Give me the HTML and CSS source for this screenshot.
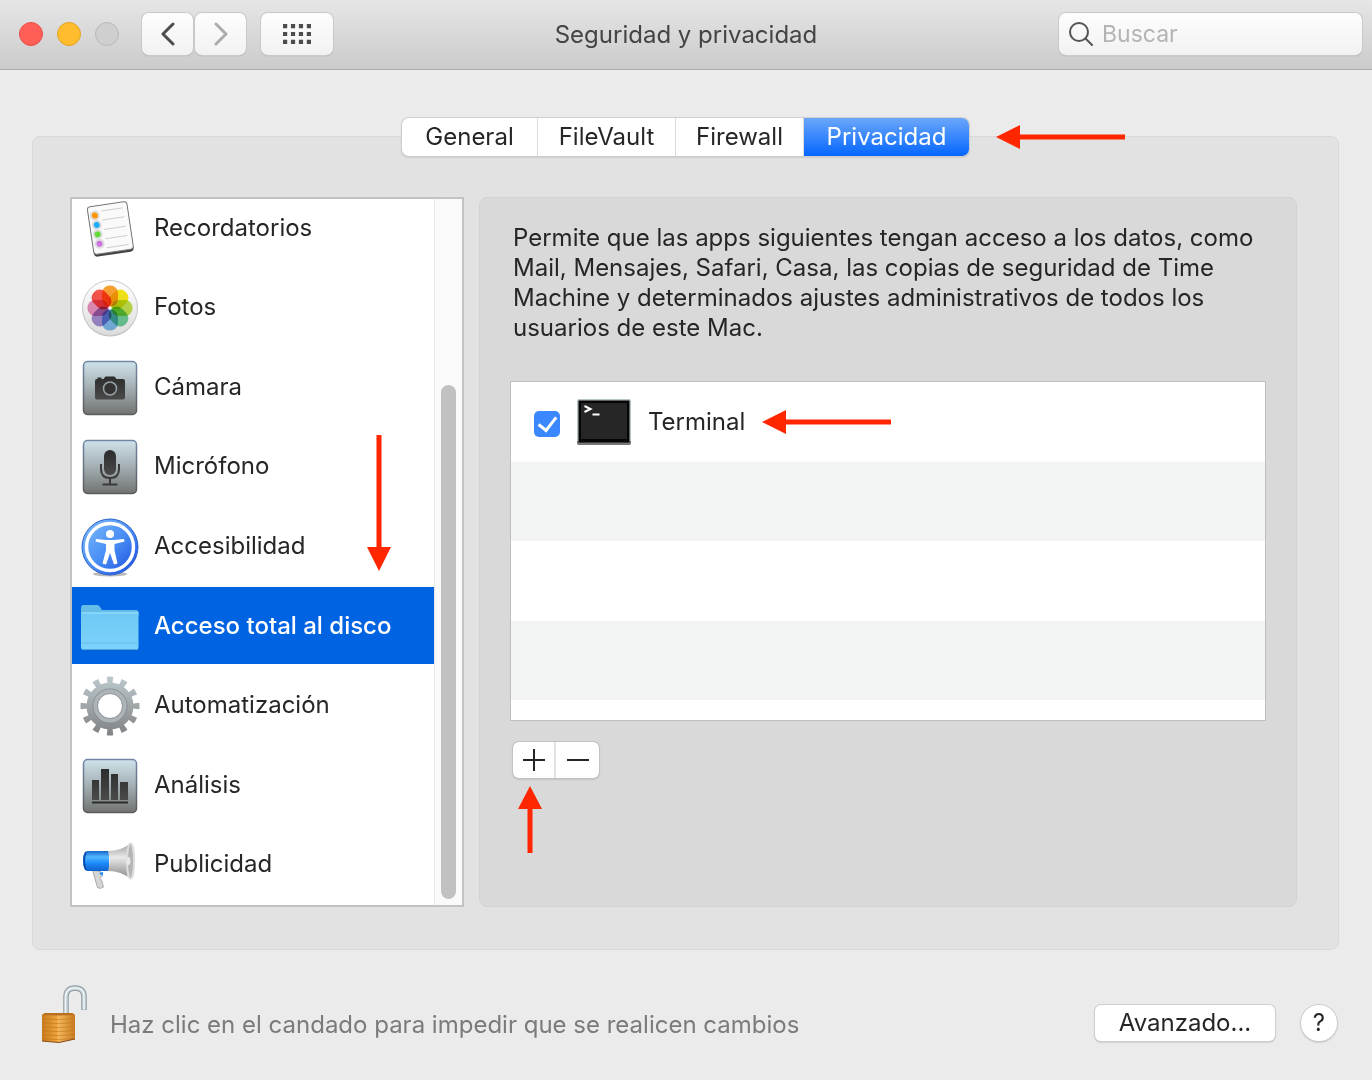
FILE: index.html
```html
<!DOCTYPE html>
<html lang="es">
<head>
<meta charset="utf-8">
<meta name="viewport" content="width=device-width, initial-scale=1">
<title>Seguridad y privacidad</title>
<link rel="stylesheet" href="styles.css">
</head>
<body>
<svg class="defs" aria-hidden="true">
  <defs>
    <linearGradient id="steel" x1="0" y1="0" x2="0" y2="1"><stop offset="0" stop-color="#cfe2ea"/><stop offset=".5" stop-color="#a3aeb2"/><stop offset="1" stop-color="#717371"/></linearGradient>
    <linearGradient id="edge" x1="0" y1="0" x2="0" y2="1"><stop offset="0" stop-color="#7388a5"/><stop offset="1" stop-color="#5b5b5b"/></linearGradient>
    <linearGradient id="dark" x1="0" y1="0" x2="0" y2="1"><stop offset="0" stop-color="#2c2c2c"/><stop offset="1" stop-color="#4a4a4a"/></linearGradient>
    <linearGradient id="gearfill" gradientUnits="userSpaceOnUse" x1="0" y1="0" x2="0" y2="60"><stop offset="0" stop-color="#bccace"/><stop offset=".5" stop-color="#a0a5a8"/><stop offset="1" stop-color="#808284"/></linearGradient>
    <linearGradient id="disc" x1="0" y1="0" x2="0" y2="1"><stop offset="0" stop-color="#ffffff"/><stop offset="1" stop-color="#dcdcdc"/></linearGradient>
    <linearGradient id="blue" x1="0" y1="0" x2="1" y2="1"><stop offset="0" stop-color="#7fbdfb"/><stop offset=".5" stop-color="#4a90f5"/><stop offset="1" stop-color="#1a48e0"/></linearGradient>
    <linearGradient id="folder" x1="0" y1="0" x2="0" y2="1"><stop offset="0" stop-color="#6dc9f5"/><stop offset="1" stop-color="#7dd3fb"/></linearGradient>
    <linearGradient id="barrel" x1="0" y1="0" x2="0" y2="1"><stop offset="0" stop-color="#1566c8"/><stop offset=".3" stop-color="#55b7ff"/><stop offset=".6" stop-color="#1c8cf8"/><stop offset="1" stop-color="#0d62cf"/></linearGradient>
    <linearGradient id="horn" x1="0" y1="0" x2="0" y2="1"><stop offset="0" stop-color="#9a9a9a"/><stop offset=".4" stop-color="#e9e9e9"/><stop offset="1" stop-color="#858585"/></linearGradient>
    <linearGradient id="brass" x1="0" y1="0" x2="1" y2="0"><stop offset="0" stop-color="#c87a1c"/><stop offset=".45" stop-color="#eda43c"/><stop offset=".5" stop-color="#f4b75a"/><stop offset="1" stop-color="#c97b20"/></linearGradient>
  </defs>
</svg>

<header class="toolbar">
  <div class="toolbar-left">
    <div class="lights">
      <button class="light light-close" aria-label="Cerrar"></button>
      <button class="light light-min" aria-label="Minimizar"></button>
      <button class="light light-zoom" aria-label="Ampliar" disabled></button>
    </div>
    <div class="nav">
      <button class="tool" aria-label="Atrás"><svg width="14" height="24" viewBox="0 0 14 24"><path d="M12 2 2 12l10 10" fill="none" stroke="#4c4c4c" stroke-width="3" stroke-linecap="round" stroke-linejoin="round"/></svg></button>
      <button class="tool" aria-label="Adelante"><svg width="14" height="24" viewBox="0 0 14 24"><path d="m2 2 10 10L2 22" fill="none" stroke="#acacac" stroke-width="3" stroke-linecap="round" stroke-linejoin="round"/></svg></button>
    </div>
    <button class="tool tool-wide" aria-label="Mostrar todo"><svg width="28" height="20" viewBox="0 0 28 20"><path d="M0 2.200H28M0 10H28M0 17.800H28" fill="none" stroke="#4c4c4c" stroke-width="4.200" stroke-dasharray="4.200 3.730"/></svg></button>
  </div>
  <h1 class="title">Seguridad y privacidad</h1>
  <label class="search">
    <svg width="25" height="25" viewBox="0 0 25 25"><g fill="none" stroke="#555" stroke-width="2" stroke-linecap="round"><circle cx="10" cy="11" r="9"/><path d="m16.500 17.500 6.500 6.500"/></g></svg>
    <input type="search" placeholder="Buscar" aria-label="Buscar">
  </label>
</header>

<main class="content">
  <div class="tabs" role="tablist">
    <button class="tab" role="tab">General</button>
    <button class="tab" role="tab">FileVault</button>
    <button class="tab" role="tab">Firewall</button>
    <button class="tab tab-active" role="tab" aria-selected="true">Privacidad</button>
    <svg class="arrow arrow-tabs" width="129" height="24" viewBox="0 0 129 24"><path d="M0 12 24 0v9.500h105v5H24V24z"/></svg>
  </div>

  <section class="group">
    <div class="categories">
      <ul class="category-list">
        <li class="category"><svg class="icon" viewBox="0 0 60 60"><g transform="rotate(-8.500 30 30)"><rect x="10.500" y="7" width="40" height="48.500" rx="3.500" fill="#444"/><rect x="10.500" y="5" width="40" height="48" rx="3" fill="#fafafa" stroke="#777" stroke-width="1"/><path d="M24 11h22M24 20h22M24 29.500h22M24 39h22M24 48h22" stroke="#cfcfcf" stroke-width="1"/><g stroke="#ddd" stroke-width="2"><circle cx="17" cy="14.500" r="4" fill="#ff9500"/><circle cx="17.500" cy="24" r="4" fill="#1badf8"/><circle cx="17" cy="33.500" r="4" fill="#63da38"/><circle cx="17.500" cy="43" r="4" fill="#cc73e1"/></g></g></svg><span>Recordatorios</span></li>
        <li class="category"><svg class="icon" viewBox="0 0 60 60"><circle cx="30" cy="31" r="27.500" fill="#bbb"/><circle cx="30" cy="30" r="27.500" fill="url(#disc)" stroke="#c9c9c9"/><g class="petals"><rect x="22" y="7.500" width="16" height="21" rx="7.500" fill="#fba333"/><rect x="22" y="7.500" width="16" height="21" rx="7.500" fill="#f7e81a" transform="rotate(45 30 30)"/><rect x="22" y="7.500" width="16" height="21" rx="7.500" fill="#c0e04c" transform="rotate(90 30 30)"/><rect x="22" y="7.500" width="16" height="21" rx="7.500" fill="#70d09b" transform="rotate(135 30 30)"/><rect x="22" y="7.500" width="16" height="21" rx="7.500" fill="#7fbcee" transform="rotate(180 30 30)"/><rect x="22" y="7.500" width="16" height="21" rx="7.500" fill="#a48fd2" transform="rotate(225 30 30)"/><rect x="22" y="7.500" width="16" height="21" rx="7.500" fill="#e890bc" transform="rotate(270 30 30)"/><rect x="22" y="7.500" width="16" height="21" rx="7.500" fill="#fa564e" transform="rotate(315 30 30)"/></g><circle cx="30" cy="30" r="1.500" fill="#fff"/></svg><span>Fotos</span></li>
        <li class="category"><svg class="icon" viewBox="0 0 60 60"><rect x="3.500" y="3.500" width="53" height="53" rx="4" fill="url(#steel)" stroke="url(#edge)" stroke-width="1.500"/><path d="M17 21h6.500l2-2.500h9l2 2.500H43q2 0 2 2v16.500q0 2-2 2H17q-2 0-2-2V23q0-2 2-2z" fill="url(#dark)"/><path d="M17.500 19.500h4V21h-4z" fill="#333"/><circle cx="30" cy="30.500" r="6.500" fill="#333" stroke="#98a2a6" stroke-width="1.500"/></svg><span>Cámara</span></li>
        <li class="category"><svg class="icon" viewBox="0 0 60 60"><rect x="3.500" y="3.500" width="53" height="53" rx="4" fill="url(#steel)" stroke="url(#edge)" stroke-width="1.500"/><rect x="24" y="13" width="12" height="25" rx="6" fill="url(#dark)"/><path d="M21 27v5q0 9 9 9t9-9v-5M30 41v6M22.500 47.500h15" fill="none" stroke="#3a3a3a" stroke-width="2"/></svg><span>Micrófono</span></li>
        <li class="category"><svg class="icon" viewBox="0 0 60 60"><ellipse cx="30" cy="57" rx="17" ry="2.500" fill="#bbb"/><circle cx="30" cy="30" r="28" fill="url(#blue)" stroke="#2e62c8"/><circle cx="30" cy="30" r="23.500" fill="none" stroke="#fff" stroke-width="3.500"/><circle cx="30" cy="17" r="4" fill="#fff"/><path d="m16 22 10 1h8l10-1 .5 2.500-10 2.500v6l3 13.500-3.500 1L30 36l-4 11.500-3.500-1L26 33v-6l-10.500-2.500z" fill="#fff"/></svg><span>Accesibilidad</span></li>
        <li class="category category-selected"><svg class="icon" viewBox="0 0 60 60"><path d="M1 11q0-3 3-3h13q2 0 3 2l2 3h34q2.500 0 2.500 2.500V20H1z" fill="#63bde8"/><path d="M1 15.500h57.500V50q0 3-3 3H4q-3 0-3-3z" fill="url(#folder)"/><path d="M1.500 16h57" stroke="#a2e2ff"/><path d="M1 46h57.500" stroke="#66c0ea"/><path d="M2 52.500h56" stroke="#4ca6d8"/></svg><span>Acceso total al disco</span></li>
        <li class="category"><svg class="icon" viewBox="0 0 60 60"><g fill="none" stroke="url(#gearfill)"><circle cx="30" cy="30" r="25.500" stroke-width="8" pathLength="120" stroke-dasharray="4.400 5.600" stroke-dashoffset="2.200"/><circle cx="30" cy="30" r="18" stroke-width="11"/></g><circle cx="30" cy="30" r="17" fill="none" stroke="#848a8e"/><circle cx="30" cy="30" r="14.500" fill="none" stroke="#adb4b7" stroke-width="4"/><circle cx="30" cy="30" r="12.500" fill="#fff" stroke="#8a8f92"/></svg><span>Automatización</span></li>
        <li class="category"><svg class="icon" viewBox="0 0 60 60"><rect x="3.500" y="3.500" width="53" height="53" rx="4" fill="url(#steel)" stroke="url(#edge)" stroke-width="1.500"/><path d="M12 24h7v20h-7zM21 13h8v31h-8zM31 18h7v26h-7zM40 26h8v18h-8z" fill="url(#dark)"/><path d="M12 46.500h36" stroke="#2c2c2c" stroke-width="2"/></svg><span>Análisis</span></li>
        <li class="category"><svg class="icon" viewBox="0 0 60 60"><path d="m12.500 35 8 1.500 1 5.500q-3 1 0 3l2 7q-3 2.500-6 .5z" fill="#d5d5d5" stroke="#aaa"/><path d="m19 38 4-1v4z" fill="#1c8cf8"/><path d="M7 16h22v20H7q-4-2-4-10t4-10z" fill="url(#barrel)"/><path d="M6 17q-4 8 0 18" fill="none" stroke="#0b4fae" stroke-width="2"/><path d="M28 16q13 0 23-8v36q-10-8-23-8 3-10 0-20z" fill="url(#horn)"/><ellipse cx="50.500" cy="26" rx="3.500" ry="17.500" fill="#b4b4b4" stroke="#dcdcdc" stroke-width="2"/><ellipse cx="48.500" cy="26" rx="2" ry="4" fill="#e8e8e8"/></svg><span>Publicidad</span></li>
      </ul>
      <div class="scrollbar"><div class="thumb"></div></div>
      <svg class="arrow arrow-list" width="24" height="136" viewBox="0 0 24 136"><path d="M12 136 0 112h9.500V0h5v112H24z"/></svg>
    </div>

    <div class="detail">
      <p class="description">Permite que las apps siguientes tengan acceso a los datos, como Mail, Mensajes, Safari, Casa, las copias de seguridad de Time Machine y determinados ajustes administrativos de todos los usuarios de este Mac.</p>
      <ul class="apps">
        <li class="app">
          <input class="check" type="checkbox" id="app-terminal" checked>
          <label class="app-label" for="app-terminal">
            <svg width="54" height="46" viewBox="0 0 54 46"><rect x="0" y="0" width="54" height="46" rx="2" fill="#b9c4c7"/><path d="M0 42h54v2q0 2-2 2H2q-2 0-2-2z" fill="#777"/><rect x="1.500" y="1.500" width="51" height="42" fill="#050505"/><rect x="4" y="4" width="46" height="36" fill="#262626"/><path d="m7.500 7 6 3-6 3M15.500 15.500h7" fill="none" stroke="#fff" stroke-width="2"/></svg>
            <span>Terminal</span>
          </label>
          <svg class="arrow" width="129" height="24" viewBox="0 0 129 24"><path d="M0 12 24 0v9.500h105v5H24V24z"/></svg>
        </li>
      </ul>
      <div class="edit">
        <button class="edit-button" aria-label="Añadir"><svg width="22" height="22" viewBox="0 0 22 22"><path d="M0 11h22M11 0v22" stroke="#262626" stroke-width="2"/></svg></button>
        <button class="edit-button" aria-label="Eliminar"><svg width="22" height="22" viewBox="0 0 22 22"><path d="M0 11h22" stroke="#262626" stroke-width="2"/></svg></button>
      </div>
      <svg class="arrow arrow-add" width="24" height="67" viewBox="0 0 24 67"><path d="m12 0 12 23h-9.500v44h-5V23H0z"/></svg>
    </div>
  </section>
</main>

<footer class="footer">
  <button class="lock" aria-label="Candado"><svg width="46" height="60" viewBox="0 0 46 60"><g fill="none"><path d="M24 31V13q0-9 9-9t9 9v13" stroke="#8e9ca2" stroke-width="5.500"/><path d="M24 31V13q0-9 9-9t9 9v12.500" stroke="#c3d0d5" stroke-width="3.500"/><path d="M23.500 31V13q0-9 9.500-9t9 9v12.500" stroke="#eef4f6" stroke-width="1.500"/></g><path d="m0 31 3-2h27l3 2v24l-16 3.500L0 57z" fill="url(#brass)"/><path d="m3 29-3 2 16 .5 17-.5-3-2z" fill="#b87020"/><path d="m0 35 17 .5 16-1M0 39l17 .5 16-1M0 43l17 .5 16-1M0 47l17 .5 16-1M0 51l17 .5 16-1M0 55l17 .5 16-1" fill="none" stroke="#b96f18" stroke-opacity=".5"/><path d="m0 57 17 1.500L33 55" fill="none" stroke="#8c4a12"/></svg></button>
  <p class="hint">Haz clic en el candado para impedir que se realicen cambios</p>
  <button class="advanced">Avanzado...</button>
  <button class="help" aria-label="Ayuda">?</button>
</footer>
</body>
</html>
```
FILE: styles.css
```css
* {
  box-sizing: border-box;
}

body {
  margin: 0;
  min-height: 100vh;
  display: flex;
  flex-direction: column;
  background: #ebebeb;
  color: #262626;
  font-family: Inter, "Liberation Sans", sans-serif;
  font-size: 24px;
  line-height: 30px;
}

button,
input {
  font: inherit;
  color: inherit;
  padding: 0;
  border: 0;
}

ul,
p,
h1 {
  margin: 0;
  padding: 0;
  list-style: none;
}

svg {
  display: block;
  flex: none;
}

.defs {
  position: absolute;
  width: 0;
  height: 0;
}

.arrow {
  fill: #ff2600;
}

/* Toolbar */
.toolbar {
  display: grid;
  grid-template-columns: 1fr auto 1fr;
  align-items: center;
  height: 70px;
  padding: 0 10px 2px;
  background: linear-gradient(#e6e6e6, #cbcbcb);
  border-bottom: 1px solid #acacac;
}

.toolbar-left {
  display: flex;
  align-items: center;
  gap: 15px;
  padding-left: 9px;
}

.lights {
  display: flex;
  gap: 14px;
  padding-right: 8px;
}

.light {
  width: 24px;
  height: 24px;
  border-radius: 50%;
}

.light-close {
  background: #ff5f57;
  border: 1px solid #e8504a;
}

.light-min {
  background: #ffbd2e;
  border: 1px solid #e3a325;
}

.light-zoom {
  background: #cfcfcf;
  border: 1px solid #b9b9b9;
}

.nav {
  display: flex;
  gap: 2px;
}

.tool,
.search {
  display: flex;
  align-items: center;
  height: 42px;
  border-radius: 7px;
  background: linear-gradient(#fdfdfd, #f2f2f2);
  box-shadow: 0 0 0 1px #c9c9c9, 0 1px 1px #8f8f8f;
}

.tool {
  justify-content: center;
  width: 51px;
}

.tool-wide {
  width: 72px;
}

.title {
  padding-top: 2px;
  font-size: 24px;
  font-weight: 400;
  color: #444;
}

.search {
  justify-self: end;
  width: 303px;
  padding: 0 10px;
  gap: 8px;
}

.search input {
  flex: 1;
  min-width: 0;
  background: none;
  outline: 0;
  font-size: 23px;
}

.search input::placeholder {
  color: #b4b4b4;
  opacity: 1;
}

/* Tabs */
.content {
  padding: 48px 33px 0 32px;
}

.tabs {
  position: relative;
  display: grid;
  grid-template-columns: 136px 138px 128px 165px;
  width: max-content;
  height: 38px;
  margin: 0 auto -20px;
  border-radius: 7px;
  background: #fff;
  box-shadow: 0 0 0 1px #cfcfcf, 0 1px 2px #999;
}

.tab {
  background: none;
  border-right: 1px solid #dcdcdc;
}

.tab-active {
  color: #fff;
  border: 0;
  border-radius: 0 7px 7px 0;
  background: linear-gradient(#6ba7fa, #0466ff);
}

.arrow-tabs {
  position: absolute;
  left: calc(100% + 27px);
  top: 7px;
}

/* Group box */
.group {
  display: flex;
  gap: 15px;
  padding: 60px 41px 42px 37px;
  background: #e2e2e2;
  border: 1px solid #d9d9d9;
  border-radius: 8px;
}

.categories {
  position: relative;
  display: flex;
  align-items: flex-end;
  width: 394px;
  height: 710px;
  border: 2px solid #c3c3c3;
  background: #fff;
  overflow: hidden;
}

.category-list {
  flex: 1;
  display: grid;
  grid-template-rows: repeat(9, 1fr);
  height: 716px;
}

.category {
  display: flex;
  align-items: center;
  gap: 14px;
  padding-left: 8px;
  border-bottom: 2px solid #fff;
}

.category-selected {
  color: #fff;
  font-weight: 500;
  background: #0063e1;
}

.icon {
  width: 60px;
  height: 60px;
  margin-top: 2px;
}

.petals rect {
  mix-blend-mode: multiply;
}

.scrollbar {
  align-self: stretch;
  display: flex;
  flex-direction: column;
  justify-content: flex-end;
  width: 28px;
  padding: 6px;
  background: #fafafa;
  border-left: 1px solid #e6e6e6;
}

.thumb {
  height: 74%;
  border-radius: 8px;
  background: #c1c1c1;
}

.arrow-list {
  position: absolute;
  left: 295px;
  top: 236px;
}

/* Detail panel */
.detail {
  flex: 1;
  min-width: 0;
  padding: 25px 30px;
  background: #d9d9d9;
  border: 1px solid #d2d2d2;
  border-radius: 8px;
}

.description {
  padding-left: 3px;
}

.apps {
  height: 340px;
  margin: 38px 0 21px;
  border: 1px solid #bfbfbf;
  background: repeating-linear-gradient(#fff 0 80px, #f3f5f4 80px 159px);
}

.app {
  display: flex;
  align-items: center;
  height: 80px;
  padding-left: 23px;
  gap: 17px;
}

.check {
  appearance: none;
  display: grid;
  place-items: center;
  width: 26px;
  height: 26px;
  margin: 4px 0 0;
  border-radius: 5px;
  background: #3b87fd;
}

.check:checked::after {
  content: "";
  width: 8px;
  height: 15px;
  margin-bottom: 4px;
  border: solid #fff;
  border-width: 0 3px 3px 0;
  transform: rotate(38deg);
}

.app-label {
  display: flex;
  align-items: center;
  gap: 17px;
}

.edit {
  display: grid;
  grid-template-columns: 1fr 1fr;
  width: 86px;
  height: 36px;
  margin: 0 3px 8px;
  border-radius: 6px;
  background: #fff;
  box-shadow: 0 0 0 1px #c2c2c2, 0 1px 2px #999;
}

.edit-button {
  display: grid;
  place-items: center;
  background: none;
}

.edit-button:first-child {
  border-right: 2px solid #e2e2e2;
}

.arrow-add {
  margin-left: 8px;
}

/* Footer */
.footer {
  display: flex;
  align-items: center;
  padding: 34px 35px 0 42px;
}

.lock {
  background: none;
}

.hint {
  flex: 1;
  padding: 22px 0 0 22px;
  color: #7b7b7b;
}

.advanced,
.help {
  margin-top: 18px;
  background: #fff;
  box-shadow: 0 0 0 1px #cfcfcf, 0 1px 2px #999;
}

.advanced {
  width: 180px;
  height: 36px;
  margin-right: 26px;
  border-radius: 6px;
}

.help {
  width: 36px;
  height: 36px;
  border-radius: 50%;
}
```
